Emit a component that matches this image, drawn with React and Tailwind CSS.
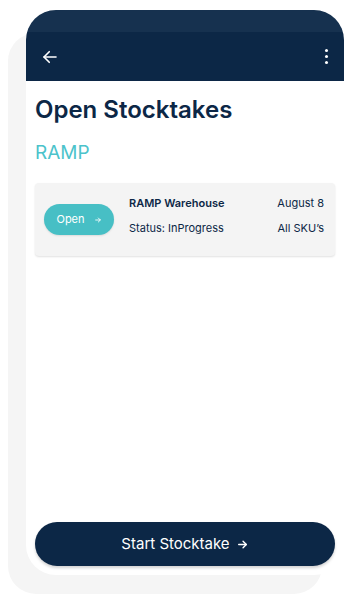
import React from 'react';

const navy = 'bg-[#0c2746]';

const ArrowRight = ({ className }) => (
    <svg viewBox="0 0 24 24" className={className} fill="none" stroke="currentColor" strokeWidth="2.6" strokeLinecap="round" strokeLinejoin="round">
        <path d="M5 12h14" />
        <path d="M13 6l6 6-6 6" />
    </svg>
);

const StocktakeCard = () => (
    <div className="flex items-center rounded-[4px] bg-[#f4f4f4] shadow-[0_1px_2px_rgba(0,0,0,0.12)] h-[73px] pl-[9px] pr-[11px]">
        <button className="flex items-center justify-center gap-[9px] w-[70px] h-[31px] rounded-full bg-[#47bfc5] text-white text-[11px] shadow-[0_1px_2px_rgba(0,0,0,0.1)]">
            <span>Open</span>
            <ArrowRight className="w-[8px] h-[8px]" />
        </button>
        <div className="flex-1 ml-[15px] mb-[8px] flex flex-col gap-[8px] text-[11px] text-[#0c2746]">
            <div className="flex justify-between">
                <span className="font-semibold">RAMP Warehouse</span>
                <span>August 8</span>
            </div>
            <div className="flex justify-between">
                <span>Status: InProgress</span>
                <span>All SKU’s</span>
            </div>
        </div>
    </div>
);

const App = () => {
    return (
        <div className="w-[355px] h-[608px] bg-white overflow-hidden pt-[10px] pl-[26px]" style={{ fontFamily: 'Inter, "Noto Sans", sans-serif' }}>
            <div className="w-[318px] h-[565px] rounded-[30px] bg-white flex flex-col overflow-hidden shadow-[-20px_21px_0_-2px_#f5f5f5]">
                <div className="h-[22px] bg-[#16314f]" />
                <div className={`h-[49px] ${navy} flex items-center justify-between pl-[15px] pr-[16px] text-white`}>
                    <svg viewBox="0 0 24 24" className="w-[18px] h-[18px]" fill="none" stroke="currentColor" strokeWidth="2.2" strokeLinecap="round" strokeLinejoin="round">
                        <path d="M20 12H4" />
                        <path d="M11 5l-7 7 7 7" />
                    </svg>
                    <div className="flex flex-col gap-[3px]">
                        <span className="w-[3px] h-[3px] rounded-full bg-white" />
                        <span className="w-[3px] h-[3px] rounded-full bg-white" />
                        <span className="w-[3px] h-[3px] rounded-full bg-white" />
                    </div>
                </div>
                <div className="flex-1 flex flex-col px-[9px]">
                    <h1 className="mt-[13px] text-[24px] leading-[32px] font-semibold text-[#0c2746]">Open Stocktakes</h1>
                    <h2 className="mt-[15px] text-[19px] leading-[24px] text-[#4cc3cb]">RAMP</h2>
                    <div className="mt-[18px]">
                        <StocktakeCard />
                    </div>
                    <button className={`mt-auto mb-[9px] h-[44px] rounded-full ${navy} text-white text-[15px] flex items-center justify-center gap-[6px] shadow-[0_2px_3px_rgba(0,0,0,0.18)]`}>
                        <span>Start Stocktake</span>
                        <ArrowRight className="w-[13px] h-[13px]" />
                    </button>
                </div>
            </div>
        </div>
    );
};

export default App;
